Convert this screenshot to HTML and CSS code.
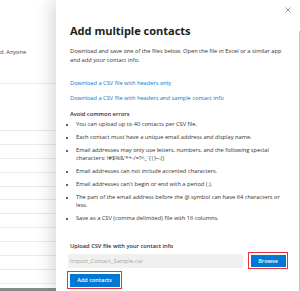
FILE: index.html
```html
<!DOCTYPE html>
<html lang="en">
<head>
<meta charset="utf-8">
<title>Add multiple contacts</title>
<link rel="stylesheet" href="styles.css">
</head>
<body>
<div class="screen">
  <div class="page">
    <div class="page-head"><span class="page-text">d. Anyone</span></div>
    <div class="page-gap"></div>
    <div class="page-row"></div>
    <div class="page-row"></div>
    <div class="page-row"></div>
    <div class="page-row"></div>
    <div class="page-row"></div>
    <div class="page-row"></div>
    <div class="page-row"></div>
    <div class="page-row"></div>
    <div class="page-row"></div>
    <div class="page-row"></div>
    <div class="page-row"></div>
    <div class="page-bar"></div>
  </div>
  <div class="panel">
    <div class="content">
      <h1 class="title">Add multiple contacts</h1>
      <p class="desc">Download and save one of the files below. Open the file in Excel or a similar app and add your contact info.</p>
      <a class="link link-first" href="#">Download a CSV file with headers only</a>
      <a class="link link-second" href="#">Download a CSV file with headers and sample contact info</a>
      <h2 class="heading">Avoid common errors</h2>
      <ul class="rules">
        <li>You can upload up to 40 contacts per CSV file.</li>
        <li>Each contact must have a unique email address and display name.</li>
        <li>Email addresses may only use letters, numbers, and the following special characters: !#$%&amp;'*+-/=?^_`{|}~.()</li>
        <li>Email addresses can not include accented characters.</li>
        <li>Email addresses can't begin or end with a period (.).</li>
        <li>The part of the email address before the @ symbol can have 64 characters or less.</li>
        <li>Save as a CSV (comma delimited) file with 16 columns.</li>
      </ul>
      <div class="upload-label">Upload CSV file with your contact info</div>
      <div class="upload-row">
        <div class="file-input">Import_Contact_Sample.csv</div>
        <div class="mark"><button class="btn btn-browse">Browse</button></div>
      </div>
      <div class="mark mark-add"><button class="btn btn-add">Add contacts</button></div>
    </div>
    <div class="scroll"><div class="thumb"></div></div>
    <button class="close" aria-label="Close">
      <svg width="6" height="6" viewBox="0 0 6 6"><path d="M0.5 0.5 L5.5 5.5 M5.5 0.5 L0.5 5.5" stroke="#6b6b6b" stroke-width="0.7" fill="none"/></svg>
    </button>
  </div>
</div>
</body>
</html>
```

FILE: styles.css
```css
* { box-sizing: border-box; }
html, body { margin: 0; padding: 0; }
body {
  width: 300px;
  height: 291px;
  overflow: hidden;
  background: #ffffff;
  font-family: "Open Sans", "Noto Sans", sans-serif;
  color: #323130;
}
.screen {
  display: flex;
  width: 300px;
  height: 291px;
}
.page {
  width: 56px;
  flex: none;
  display: flex;
  flex-direction: column;
  background: #ffffff;
}
.page-head {
  height: 84px;
  padding-top: 47.5px;
  border-bottom: 1px solid #e9e9e9;
  font-size: 5.6px;
  line-height: 9px;
  white-space: nowrap;
  overflow: hidden;
}
.page-text { color: #3b3a39; }
.page-gap {
  height: 47px;
  border-bottom: 1px solid #e9e9e9;
}
.page-row {
  height: 13.9px;
  border-bottom: 1px solid #e9e9e9;
}
.page-bar {
  margin-top: auto;
  height: 3px;
  background: #8a8a8a;
}
.panel {
  position: relative;
  flex: 1;
  display: flex;
  background: #ffffff;
  box-shadow: -6px 0 14px rgba(0, 0, 0, 0.13);
}
.content {
  flex: 1;
  display: flex;
  flex-direction: column;
  align-items: flex-start;
  padding: 22.5px 9px 0 14px;
  font-size: 5.7px;
}
.title {
  margin: 0;
  font-size: 11.1px;
  line-height: 15px;
  font-weight: 700;
  letter-spacing: -0.05px;
  color: #201f1e;
}
.desc {
  margin: 9px 0 0;
  padding-right: 6px;
  line-height: 9px;
}
.link {
  color: #0078d4;
  text-decoration: none;
  line-height: 9px;
}
.link-first { margin-top: 14.5px; }
.link-second { margin-top: 5.5px; }
.heading {
  margin: 7px 0 0;
  font-size: 5.7px;
  line-height: 9px;
  font-weight: 600;
}
.rules {
  margin: 1.5px 0 0;
  padding: 0 0 0 6px;
  display: flex;
  flex-direction: column;
  gap: 5px;
  line-height: 8px;
}
.rules li::marker { font-size: 5px; }
.upload-label {
  margin-top: 20px;
  line-height: 9px;
  font-weight: 600;
}
.upload-row {
  align-self: stretch;
  margin-top: 1px;
  margin-left: -2px;
  display: flex;
  align-items: center;
  gap: 5px;
}
.file-input {
  flex: 1;
  height: 14px;
  background: #f0f0f0;
  color: #a8a6a4;
  padding-left: 2px;
  line-height: 14px;
}
.mark {
  border: 1.5px solid #e8333f;
  padding: 1.5px;
  display: flex;
}
.mark-add {
  margin-top: 2px;
  margin-left: -3px;
}
.btn {
  border: 0;
  margin: 0;
  background: #0078d4;
  color: #ffffff;
  font-family: inherit;
  font-size: 5.5px;
  font-weight: 600;
  height: 12px;
  padding: 0;
}
.btn-browse { width: 35px; }
.btn-add { width: 50px; height: 13px; }
.scroll {
  width: 3px;
  flex: none;
  padding-top: 31px;
  display: flex;
  justify-content: flex-end;
}
.thumb {
  width: 1px;
  height: 100%;
  background: #c6c6c6;
}
.close {
  position: absolute;
  top: 7px;
  left: 229px;
  width: 6px;
  height: 6px;
  padding: 0;
  border: 0;
  background: transparent;
  display: flex;
}
```
